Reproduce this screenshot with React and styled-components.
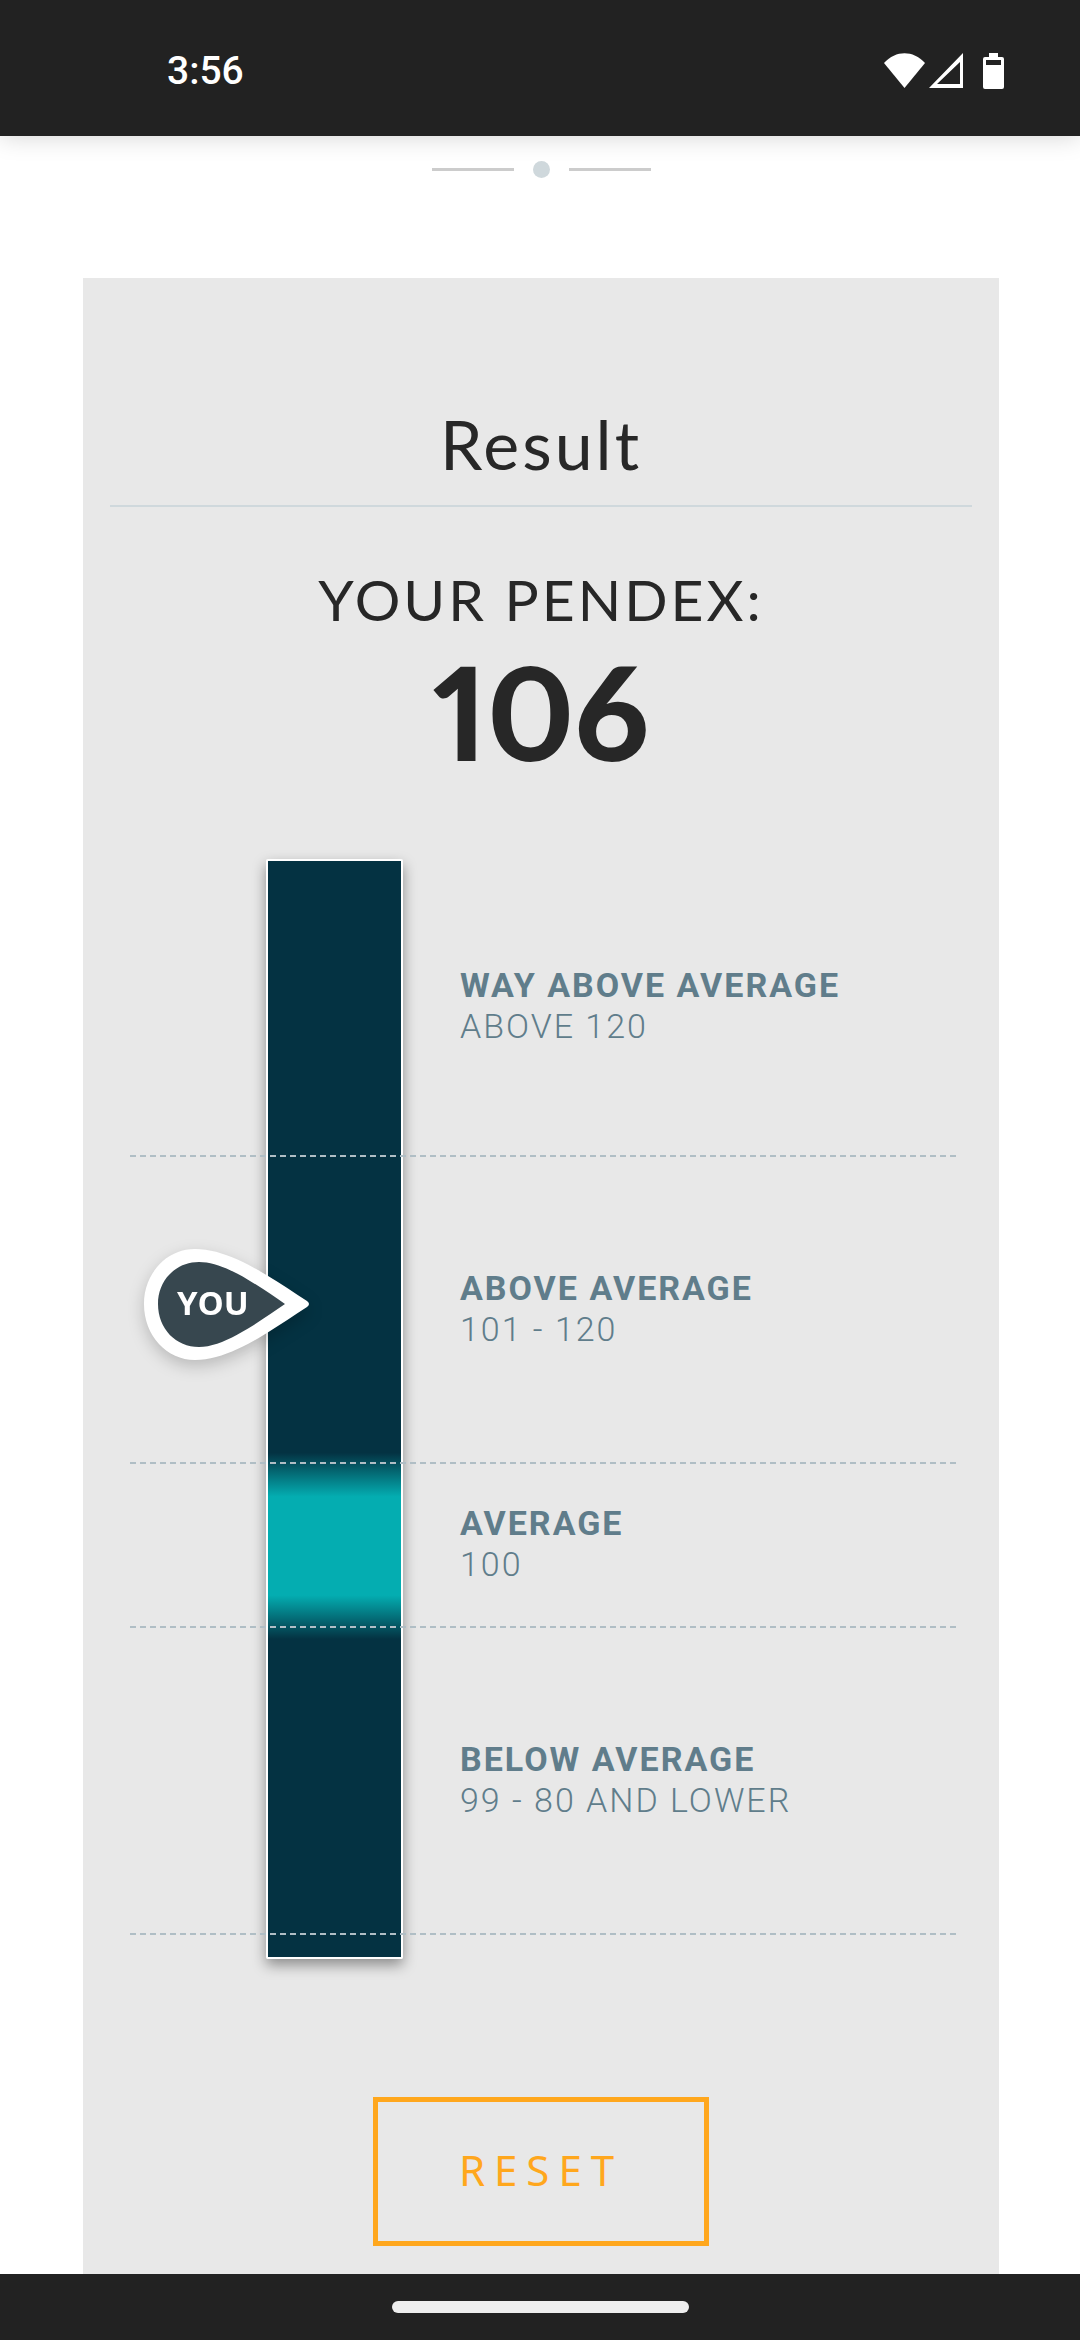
import React from "react";
import styled, { createGlobalStyle } from "styled-components";

const GlobalStyle = createGlobalStyle`
  * {
    box-sizing: border-box;
  }
  body {
    margin: 0;
    background: #fff;
    color: #272727;
    font-family: Roboto, "Liberation Sans", sans-serif;
  }
`;

const Page = styled.div`
  display: flex;
  flex-direction: column;
  min-height: 100vh;
`;

const StatusBar = styled.header`
  display: flex;
  align-items: center;
  justify-content: space-between;
  height: 136px;
  padding: 6px 76px 0 167px;
  background: #222;
  box-shadow: 0 0 24px rgba(0, 0, 0, 0.18);
  z-index: 1;
`;

const Clock = styled.time`
  color: #fff;
  font-size: 39px;
  font-weight: 500;
  line-height: 48px;
`;

const StatusIcons = styled.div`
  display: flex;
  align-items: center;
  gap: 4px;
  svg {
    display: block;
    fill: #fff;
  }
  svg:last-child {
    margin-left: 16px;
  }
`;

const Main = styled.main`
  display: flex;
  flex: 1;
  flex-direction: column;
  padding: 0 81px 0 83px;
`;

const Divider = styled.div`
  display: flex;
  align-items: center;
  justify-content: center;
  gap: 19px;
  padding: 25px 0 100px;
`;

const DividerLine = styled.span`
  width: 82px;
  height: 3px;
  background: #ccc;
`;

const DividerDot = styled.span`
  width: 17px;
  height: 17px;
  border-radius: 50%;
  background: #cfd8dc;
`;

const Card = styled.section`
  display: flex;
  flex: 1;
  flex-direction: column;
  align-items: center;
  padding: 124px 27px 28px;
  background: #e8e8e8;
`;

const Title = styled.h1`
  align-self: stretch;
  margin: 0;
  padding-bottom: 19px;
  border-bottom: 2px solid #cfd8dc;
  font-family: Lato, sans-serif;
  font-size: 68px;
  font-weight: 400;
  letter-spacing: 3px;
  line-height: 84px;
  text-align: center;
`;

const ScoreLabel = styled.h2`
  margin: 58px 0 0;
  font-family: Lato, sans-serif;
  font-size: 57px;
  font-weight: 400;
  letter-spacing: 3px;
  line-height: 68px;
`;

const Score = styled.output`
  font-family: Lato, sans-serif;
  font-size: 130px;
  font-variant-numeric: proportional-nums;
  font-weight: 900;
  line-height: 156px;
`;

const Chart = styled.div`
  display: grid;
  align-self: stretch;
  margin: 70px 16px 0 20px;
`;

const Bar = styled.div`
  grid-area: 1 / 1;
  width: 137px;
  height: 1100px;
  margin-left: 136px;
  border: 2px solid #fff;
  border-radius: 2px;
  background: linear-gradient(
    #043242 54%,
    #04adb1 58%,
    #04adb1 67%,
    #043242 71%
  );
  box-shadow: 0 6px 14px rgba(0, 0, 0, 0.4);
`;

const Levels = styled.ul`
  grid-area: 1 / 1;
  margin: 0;
  padding: 0;
  list-style: none;
  z-index: 1;
`;

const Level = styled.li`
  position: relative;
  display: flex;
  flex-direction: column;
  justify-content: center;
  height: ${(props) => props.$height}px;
  padding: 0 0 2px 330px;
  border-bottom: 2px dashed #b0bec5;
  color: #607d8b;
  font-size: 34px;
  font-weight: 300;
  letter-spacing: 2px;
  line-height: 41px;
  text-transform: uppercase;
  strong {
    font-weight: 700;
  }
`;

const Marker = styled.svg`
  position: absolute;
  top: 50%;
  left: 0;
  transform: translateY(-50%);
  filter: drop-shadow(0 6px 8px rgba(0, 0, 0, 0.2));
  text {
    fill: #fff;
    font-family: "Open Sans", sans-serif;
    font-size: 33px;
    font-weight: 700;
    letter-spacing: 0;
  }
`;

const ResetButton = styled.button`
  margin-top: 138px;
  padding: 39px 81px 43px;
  border: 5px solid #ffa71d;
  background: transparent;
  color: #ffa71d;
  font-family: "Noto Sans", sans-serif;
  font-size: 42px;
  letter-spacing: 9px;
  line-height: 57px;
`;

const NavBar = styled.footer`
  display: flex;
  align-items: center;
  justify-content: center;
  height: 66px;
  background: #222;
`;

const HomeHandle = styled.span`
  width: 297px;
  height: 12px;
  border-radius: 6px;
  background: #eee;
`;

const score = 106;

const levels = [
  { name: "Way above average", range: "Above 120", height: 298, min: 121, max: Infinity },
  { name: "Above average", range: "101 - 120", height: 307, min: 101, max: 120 },
  { name: "Average", range: "100", height: 164, min: 100, max: 100 },
  { name: "Below average", range: "99 - 80 and lower", height: 307, min: 0, max: 99 },
];

function YouMarker() {
  return (
    <Marker width="190" height="140" viewBox="0 0 190 140">
      <path
        d="M65 9C36 9 14 34 14 64C14 96 37 120 65 120C101 120 140 91 177 67Q181 64 177 61C140 37 101 9 65 9Z"
        fill="#fff"
      />
      <path
        d="M69 22C45 22 28 41 28 64C28 89 46 107 69 107C93 107 123 86 155 64C123 42 94 22 69 22Z"
        fill="#37474f"
      />
      <text x="47" y="75">
        YOU
      </text>
    </Marker>
  );
}

export default function App() {
  return (
    <>
      <GlobalStyle />
      <Page>
        <StatusBar>
          <Clock>3:56</Clock>
          <StatusIcons>
            <svg width="41" height="36" viewBox="0 0 41 36">
              <path d="M0 10C12 -3 29 -3 41 10L20.500 35Z" />
            </svg>
            <svg width="34" height="36" viewBox="0 0 34 36">
              <path d="M34 0V35H0ZM31 9L8 31H31Z" fillRule="evenodd" />
            </svg>
            <svg width="21" height="36" viewBox="0 0 21 36">
              <path
                d="M6 0H15V4H19Q21 4 21 6V34Q21 36 19 36H2Q0 36 0 34V6Q0 4 2 4H6ZM3 7V12H18V7Z"
                fillRule="evenodd"
              />
            </svg>
          </StatusIcons>
        </StatusBar>
        <Main>
          <Divider>
            <DividerLine />
            <DividerDot />
            <DividerLine />
          </Divider>
          <Card>
            <Title>Result</Title>
            <ScoreLabel>YOUR PENDEX:</ScoreLabel>
            <Score>{score}</Score>
            <Chart>
              <Bar />
              <Levels>
                {levels.map((level) => (
                  <Level key={level.name} $height={level.height}>
                    {score >= level.min && score <= level.max && <YouMarker />}
                    <strong>{level.name}</strong>
                    <span>{level.range}</span>
                  </Level>
                ))}
              </Levels>
            </Chart>
            <ResetButton type="button">RESET</ResetButton>
          </Card>
        </Main>
        <NavBar>
          <HomeHandle />
        </NavBar>
      </Page>
    </>
  );
}
